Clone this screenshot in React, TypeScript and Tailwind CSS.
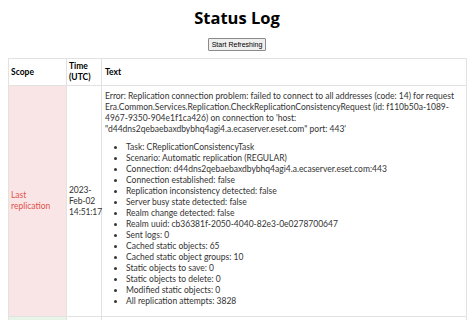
import React from 'react';

const details = [
    'Task: CReplicationConsistencyTask',
    'Scenario: Automatic replication (REGULAR)',
    'Connection: d44dns2qebaebaxdbybhq4agi4.a.ecaserver.eset.com:443',
    'Connection established: false',
    'Replication inconsistency detected: false',
    'Server busy state detected: false',
    'Realm change detected: false',
    'Realm uuid: cb36381f-2050-4040-82e3-0e0278700647',
    'Sent logs: 0',
    'Cached static objects: 65',
    'Cached static object groups: 10',
    'Static objects to save: 0',
    'Static objects to delete: 0',
    'Modified static objects: 0',
    'All replication attempts: 3828',
];

const App: React.FC = () => {
    return (
        <div className="w-[474px] h-[320px] overflow-hidden bg-white text-[#333] font-['Lato',sans-serif]">
            {/* Header */}
            <h1 className="pt-[7px] text-center text-[16.5px] leading-[22px] font-bold text-black font-['Open_Sans',sans-serif]">Status Log</h1>
            <div className="flex justify-center mt-[9px]">
                <button
                    type="button"
                    className="h-[13px] px-[3px] border border-[#8a8a8a] bg-[#efefef] text-[7px] leading-[11px] text-black rounded-[1px] font-['Liberation_Sans',sans-serif]"
                >
                    Start Refreshing
                </button>
            </div>

            {/* Log table */}
            <table className="mx-2 mt-[7px] w-[459px] border-collapse text-[8.5px] leading-[11px] table-fixed">
                <thead>
                    <tr className="h-[27px]">
                        <th className="w-[58px] border border-[#e2e2e2] px-[2px] text-left font-bold text-black">Scope</th>
                        <th className="w-[35px] border border-[#e2e2e2] px-[2px] text-left font-bold text-black">Time (UTC)</th>
                        <th className="border border-[#e2e2e2] px-[3px] text-left font-bold text-black">Text</th>
                    </tr>
                </thead>
                <tbody>
                    <tr>
                        <td className="border border-[#e2e2e2] bg-[#f9e5e5] px-[2px] align-middle text-[#e0534f]">Last replication</td>
                        <td className="border border-[#e2e2e2] pl-[2px] pr-0 align-middle whitespace-nowrap tracking-[-0.1px]">
                            2023-<br />Feb-02<br />14:51:17
                        </td>
                        <td className="border border-[#e2e2e2] px-[3px] pt-[5px] pb-[9px] align-top">
                            <p>
                                Error: Replication connection problem: failed to connect to all addresses (code: 14) for request
                                Era.Common.Services.Replication.CheckReplicationConsistencyRequest (id: f110b50a-1089-4967-9350-904e1f1ca426) on connection to 'host:
                                "d44dns2qebaebaxdbybhq4agi4.a.ecaserver.eset.com" port: 443'
                            </p>
                            <ul className="mt-[7px] list-disc pl-[21px]">
                                {details.map((d) => (
                                    <li key={d}>{d}</li>
                                ))}
                            </ul>
                        </td>
                    </tr>
                    <tr className="h-[20px]">
                        <td className="border border-[#e2e2e2] bg-[#e8f5e6]"></td>
                        <td className="border border-[#e2e2e2]"></td>
                        <td className="border border-[#e2e2e2]"></td>
                    </tr>
                </tbody>
            </table>
        </div>
    );
};

export default App;
